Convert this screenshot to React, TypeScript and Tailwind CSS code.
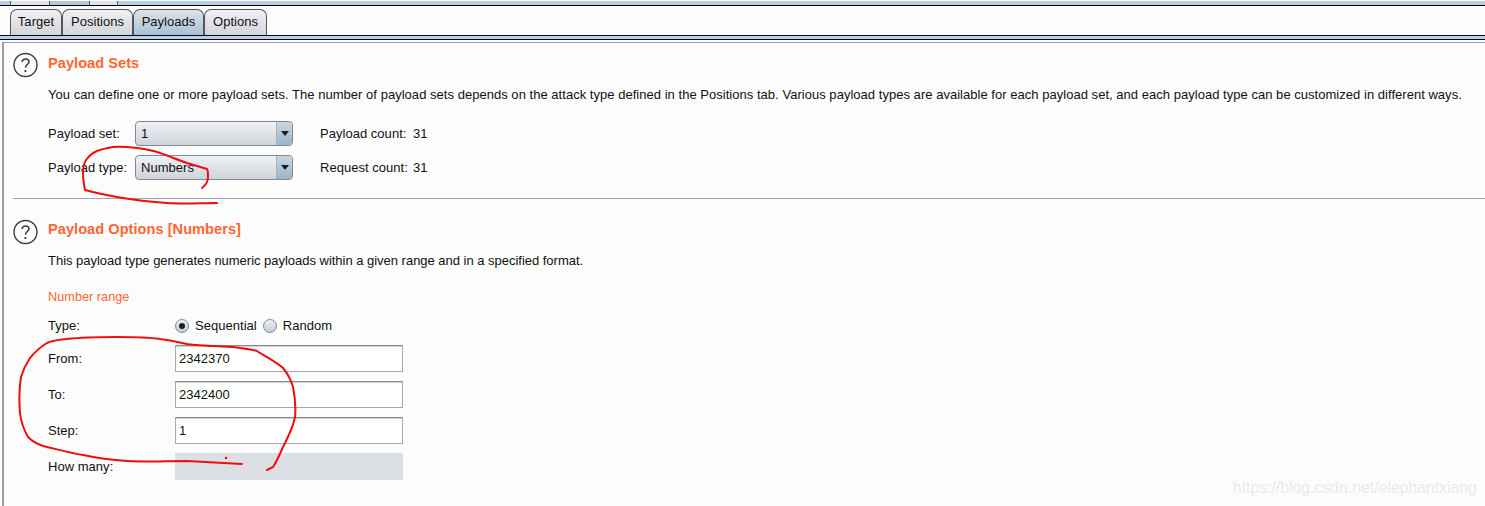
const font = { fontFamily: '"Liberation Sans", Arial, sans-serif' };

const tabs = [
  { name: "Target", width: "w-[52px]" },
  { name: "Positions", width: "w-[71px]" },
  { name: "Payloads", width: "w-[71px]" },
  { name: "Options", width: "w-[63px]" },
];

function HelpIcon() {
  return (
    <svg className="h-[26px] w-[26px] shrink-0" viewBox="0 0 26 26" fill="none">
      <circle cx="12.5" cy="13" r="11.5" stroke="#3d3d3d" strokeWidth="1.4" />
      <path d="M9.1 10c.2-2 1.6-3.1 3.5-3.1 2 0 3.4 1.2 3.4 2.9 0 1.4-.8 2.1-1.8 2.8-1 .7-1.6 1.3-1.6 2.6v.5" stroke="#3d3d3d" strokeWidth="1.5" />
      <rect x="11.5" y="18" width="1.8" height="2" fill="#3d3d3d" />
    </svg>
  );
}

function SectionHead({ title, raised }: { title: string; raised?: boolean }) {
  return (
    <div className="flex h-[26px] items-center">
      <HelpIcon />
      <h2 className={`ml-[9px] text-[14.6px] font-bold text-[#ff6633] ${raised ? "mb-[4px]" : "mb-[2px]"}`}>{title}</h2>
    </div>
  );
}

function Select({ value }: { value: string }) {
  return (
    <div className="flex h-[25px] w-[158px] overflow-hidden rounded-[4px] border border-[#7f8a99] bg-gradient-to-b from-[#f0f1f4] to-[#cfd3da]">
      <span className="flex-1 pl-[5px] leading-[23px]">{value}</span>
      <span className="flex w-[16px] items-center justify-center border-l border-[#a4b4c4] bg-gradient-to-b from-[#c9d6e2] to-[#9db4c9]">
        <svg width="8" height="5" viewBox="0 0 8 5">
          <path d="M0 0h8L4 5z" fill="#1b1b1b" />
        </svg>
      </span>
    </div>
  );
}

function SelectRow({ label, value, countLabel }: { label: string; value: string; countLabel: string }) {
  return (
    <div className="flex items-center">
      <span className="w-[87px]">{label}</span>
      <Select value={value} />
      <span className="ml-[27px] w-[93px]">{countLabel}</span>
      <span>31</span>
    </div>
  );
}

function InputRow({ label, value, disabled }: { label: string; value?: string; disabled?: boolean }) {
  return (
    <div className="flex items-center">
      <span className="w-[127px]">{label}</span>
      {disabled ? (
        <div className="h-[27px] w-[228px] bg-[#dcdfe4]" />
      ) : (
        <div className="h-[27px] w-[228px] border border-[#a9a9a9] border-t-[#8a8a8a] bg-white pl-[3px] leading-[25px] shadow-[inset_0_1px_1px_#d0d0d0]">
          {value}
        </div>
      )}
    </div>
  );
}

function Radio({ checked, label }: { checked?: boolean; label: string }) {
  return (
    <span className="flex items-center">
      <span className="mr-[6px] flex h-[14px] w-[14px] items-center justify-center rounded-full border border-[#7d8a99] bg-gradient-to-b from-[#eef0f3] to-[#c4ccd6]">
        {checked && <span className="h-[6px] w-[6px] rounded-full bg-[#1c1c1c]" />}
      </span>
      {label}
    </span>
  );
}

export default function App() {
  return (
    <div style={font} className="relative h-[506px] w-[1485px] overflow-hidden bg-[#fcfcfc] text-[13px] tracking-[0.03px] text-[#111]">
      {/* Strip of the outer tab bar cut off by the crop */}
      <div className="flex h-[6px] border-t border-b border-t-[#fcfcfc] border-b-black bg-[#b9cfe3]">
        <div className="ml-[10px] w-[40px] border-x border-[#555] bg-[#e2e4e9]" />
        <div className="w-[39px] bg-[#b4c9dc]" />
        <div className="w-[29px] border-x border-[#555] bg-[#e2e4e9]" />
        <div className="flex-1 bg-[#b9cfe3]" />
      </div>

      {/* Tabs */}
      <div className="flex h-[29px] items-end bg-[#fcfcfc] pl-[10px]">
        {tabs.map((tab) => (
          <div
            key={tab.name}
            className={`flex h-[26px] items-center justify-center rounded-t-[7px] border border-b-0 border-[#555] pb-[1px] ${tab.width} ${
              tab.name === "Payloads"
                ? "bg-gradient-to-b from-[#dfe4ea] to-[#a9c0d4]"
                : "bg-gradient-to-b from-[#f0f1f3] to-[#d3d5db]"
            }`}
          >
            {tab.name}
          </div>
        ))}
      </div>
      <div className="h-[5px] border-y border-[#05091a] bg-[#b9cfe3]" />

      {/* Panel */}
      <div className="mt-[2px] ml-[2px] h-[464px] border-t border-l-2 border-[#9b9aa8]">
        <div className="pt-[9px] pl-[9px]">
          <SectionHead title="Payload Sets" />
          <p className="mt-[10px] ml-[35px] leading-[14px] whitespace-nowrap">
            You can define one or more payload sets. The number of payload sets depends on the attack type defined in the Positions tab. Various payload types are available for each payload set, and each payload type can be customized in different ways.
          </p>
          <div className="mt-[19px] ml-[35px] flex flex-col gap-[9px]">
            <SelectRow label="Payload set:" value="1" countLabel="Payload count:" />
            <SelectRow label="Payload type:" value="Numbers" countLabel="Request count:" />
          </div>
        </div>

        <div className="mt-[18px] ml-[9px] h-px bg-[#a5a4b4]" />

        <div className="pt-[20px] pl-[9px]">
          <SectionHead title="Payload Options [Numbers]" raised />
          <p className="mt-[9px] ml-[35px] leading-[14px] tracking-[-0.02px]">
            This payload type generates numeric payloads within a given range and in a specified format.
          </p>
          <div className="ml-[35px]">
            <h3 className="mt-[22px] text-[12.7px] leading-[14px] text-[#ff6633]">Number range</h3>
            <div className="mt-[15px] flex h-[14px] items-center">
              <span className="w-[127px]">Type:</span>
              <Radio checked label="Sequential" />
              <span className="w-[6px]" />
              <Radio label="Random" />
            </div>
            <div className="mt-[12px] flex flex-col gap-[9px]">
              <InputRow label="From:" value="2342370" />
              <InputRow label="To:" value="2342400" />
              <InputRow label="Step:" value="1" />
              <InputRow label="How many:" disabled />
            </div>
          </div>
        </div>
      </div>

      {/* Red pen annotations drawn on top of the screenshot */}
      <svg className="pointer-events-none absolute inset-0" width="1485" height="506" viewBox="0 0 1485 506" fill="none">
        <path
          d="M202 188C206 185 208 181 208 177C208 173 208 170 207 169C200 167 194 165 187 163C178 160 169 156 160 153C152 150 145 149 137 148C129 147 121 146 113 147C107 148 102 149 97 151C92 153 89 156 86 160C83 165 83 169 83 173C83 179 84 185 85 190C95 193 106 195 117 197C134 200 150 202 167 203C184 204 200 203 217 203"
          stroke="#f00d0d"
          strokeWidth="2"
          strokeLinecap="round"
        />
        <path
          d="M267 470C269 469 271 468 273 467C277 461 280 454 283 447C288 437 293 428 295 417C296 407 295 397 293 387C291 380 288 374 283 368C275 361 266 357 257 351C249 349 241 348 233 347C218 346 202 346 187 344C178 342 169 340 160 339C146 337 131 337 117 337C100 337 84 337 67 339C59 340 53 340 47 343C40 347 35 352 30 358C26 364 23 370 21 377C19 389 19 401 20 413C21 422 24 430 28 437C32 441 37 444 43 446C56 449 70 453 83 455C97 458 112 460 127 461C147 462 167 461 187 461C205 462 224 463 242 464"
          stroke="#f00d0d"
          strokeWidth="2"
          strokeLinecap="round"
        />
        <circle cx="226" cy="458" r="1.2" fill="#f00d0d" />
      </svg>

      {/* Blog watermark */}
      <span className="absolute right-[8px] top-[479px] text-[15.8px] leading-[18px] tracking-normal text-[#ebebeb]">
        https://blog.csdn.net/elephantxiang
      </span>
    </div>
  );
}
